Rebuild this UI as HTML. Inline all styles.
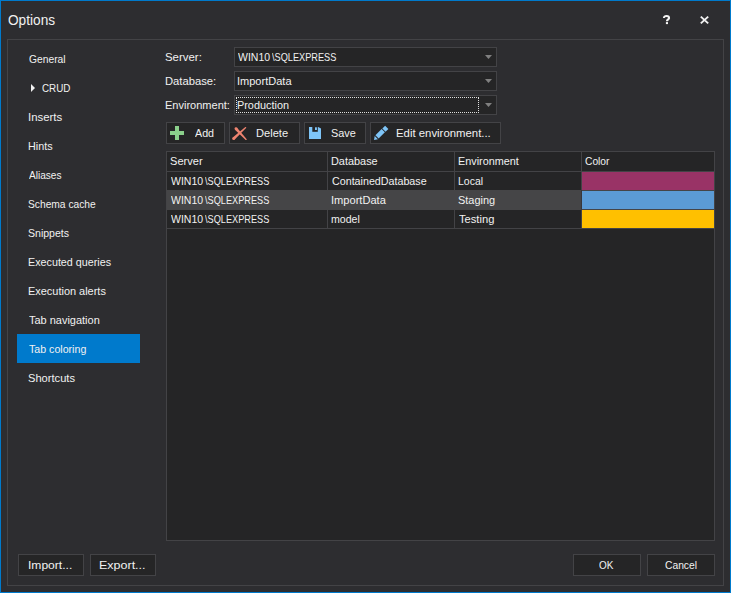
<!DOCTYPE html>
<html><head><meta charset="utf-8">
<style>
*{box-sizing:border-box;margin:0;padding:0}
html,body{width:731px;height:593px;overflow:hidden;background:#2d2d30}
body{position:relative;font-family:"Liberation Sans",sans-serif;font-size:11px;color:#f1f1f1}
.a{position:absolute}
.t{position:absolute;white-space:nowrap;line-height:11px;transform-origin:0 0}
#frame{left:0;top:0;width:731px;height:593px;border:1px solid #007acc}
#group{left:7px;top:39px;width:717px;height:547px;border:1px solid #434346}
#sel{left:17px;top:334px;width:123px;height:29px;background:#007acc}
.combo{position:absolute;left:234px;width:263px;height:20px;border:1px solid #434346;background:#252526}
.btn{position:absolute;height:22px;border:1px solid #434346;background:#252526}
#grid{left:166px;top:151px;width:549px;height:390px;border:1px solid #434346;background:#252526}
.vl{position:absolute;width:1px;background:#434346}
.hl{position:absolute;height:1px;background:#434346}
</style></head><body>
<div class="a" id="frame"></div>
<svg class="a" style="left:662px;top:14px" width="10" height="12" viewBox="0 0 10 12"><path d="M1.9 4 C1.9 2.7 2.9 2 4.5 2 C6.1 2 7.1 2.7 7.1 3.9 C7.1 5.3 4.9 5.5 4.9 7.3" fill="none" stroke="#f4f4f4" stroke-width="2"/><rect x="3.9" y="8.1" width="2.1" height="2" fill="#f4f4f4"/></svg>
<svg class="a" style="left:699px;top:15px" width="11" height="10" viewBox="0 0 11 10"><path d="M1.8 1.6 L9.2 8.4 M9.2 1.6 L1.8 8.4" stroke="#f1f1f1" stroke-width="1.9"/></svg>

<div class="a" id="group"></div>
<div class="a" id="sel"></div>
<svg class="a" style="left:30px;top:83px" width="6" height="10"><path d="M1 1 L5 5 L1 9 Z" fill="#f1f1f1"/></svg>

<div class="combo" style="top:47px"></div>
<div class="combo" style="top:71px"></div>
<div class="combo" style="top:95px"></div>
<div class="a" style="left:236px;top:97px;width:243px;height:16px;border:1px dotted #e0e0e0"></div>
<svg class="a" style="left:480px;top:50px" width="16" height="60"><path d="M5 5h7l-3.5 4z M5 29h7l-3.5 4z M5 53h7l-3.5 4z" fill="#808080"/></svg>

<div class="btn" style="left:166px;top:122px;width:59px"></div>
<svg class="a" style="left:170px;top:126px" width="14" height="14"><path d="M5 0h4v5h5v4h-5v5h-4v-5h-5v-4h5z" fill="#8bd08b"/></svg>
<div class="btn" style="left:229px;top:122px;width:71px"></div>
<svg class="a" style="left:230px;top:124px" width="20" height="18"><g fill="#ef8470"><path d="M4.95 5.80 L15.66 15.91 L16.54 15.09 L7.05 3.80Z M4.71 15.61 L16.07 3.91 L15.33 3.09 L2.69 13.39Z"/><circle cx="6.0" cy="4.8" r="1.45"/><circle cx="16.1" cy="15.5" r="0.6"/><circle cx="3.7" cy="14.5" r="1.5"/><circle cx="15.7" cy="3.5" r="0.55"/></g></svg>
<div class="btn" style="left:304px;top:122px;width:62px"></div>
<svg class="a" style="left:308px;top:126px" width="14" height="14"><path d="M1 1H10.2L13 2.6V13H1Z" fill="#7ec4f7"/><rect x="4.3" y="1" width="5.5" height="4.8" fill="#252526"/><rect x="7" y="1.3" width="1.9" height="2.7" fill="#7ec4f7"/></svg>
<div class="btn" style="left:370px;top:122px;width:131px"></div>
<svg class="a" style="left:368px;top:120px" width="30" height="26"><g transform="translate(6.0 20.0) rotate(-45)" fill="#7ec4f7"><path d="M0 0L3.3 -2.3V2.3Z"/><rect x="4.3" y="-2.3" width="8.8" height="4.6"/><rect x="14.1" y="-2.3" width="3.9" height="4.6"/></g></svg>

<div class="a" id="grid"></div>
<div class="hl" style="left:167px;top:171px;width:547px"></div>
<div class="hl" style="left:167px;top:228px;width:547px"></div>
<div class="vl" style="left:327px;top:152px;height:76px"></div>
<div class="vl" style="left:454px;top:152px;height:76px"></div>
<div class="vl" style="left:581px;top:152px;height:76px"></div>
<div class="a" style="left:167px;top:190px;width:547px;height:20px;background:#454547"></div>
<div class="a" style="left:581px;top:190px;width:1px;height:20px;background:#38383a"></div>
<div class="a" style="left:582px;top:172px;width:132px;height:18px;background:#993366"></div>
<div class="a" style="left:582px;top:191px;width:132px;height:18px;background:#5b9bd5"></div>
<div class="a" style="left:582px;top:210px;width:132px;height:18px;background:#ffc000"></div>

<div class="btn" style="left:18px;top:554px;width:66px"></div>
<div class="btn" style="left:90px;top:554px;width:66px"></div>
<div class="btn" style="left:573px;top:554px;width:68px"></div>
<div class="btn" style="left:647px;top:554px;width:68px"></div>
<div class="t" style="left:28.90px;top:54px;transform:scaleX(0.9359);">General</div>
<div class="t" style="left:41.80px;top:83px;transform:scaleX(0.8935);">CRUD</div>
<div class="t" style="left:27.87px;top:112px;transform:scaleX(1.0344);">Inserts</div>
<div class="t" style="left:27.92px;top:141px;transform:scaleX(0.9792);">Hints</div>
<div class="t" style="left:28.90px;top:170px;transform:scaleX(0.9171);">Aliases</div>
<div class="t" style="left:27.97px;top:199px;transform:scaleX(0.9306);">Schema cache</div>
<div class="t" style="left:27.94px;top:228px;transform:scaleX(0.9595);">Snippets</div>
<div class="t" style="left:27.92px;top:257px;transform:scaleX(0.9774);">Executed queries</div>
<div class="t" style="left:27.91px;top:286px;transform:scaleX(0.9948);">Execution alerts</div>
<div class="t" style="left:29.30px;top:315px;transform:scaleX(0.9971);">Tab navigation</div>
<div class="t" style="left:29.30px;top:344px;transform:scaleX(0.9661);">Tab coloring</div>
<div class="t" style="left:27.89px;top:373px;transform:scaleX(1.0111);">Shortcuts</div>
<div class="t" style="left:164.66px;top:52px;transform:scaleX(1.0382);">Server:</div>
<div class="t" style="left:164.68px;top:76px;transform:scaleX(1.0208);">Database:</div>
<div class="t" style="left:164.70px;top:100px;transform:scaleX(1.0016);">Environment:</div>
<div class="t" style="left:237.90px;top:52px;transform:scaleX(0.9545);">WIN10</div>
<div class="t" style="left:271.60px;top:52px;transform:scaleX(0.8351);">\SQLEXPRESS</div>
<div class="t" style="left:236.90px;top:76px;transform:scaleX(1.0019);">ImportData</div>
<div class="t" style="left:236.61px;top:100px;transform:scaleX(0.9882);">Production</div>
<div class="t" style="left:194.90px;top:128px;transform:scaleX(0.9737);">Add</div>
<div class="t" style="left:255.99px;top:128px;transform:scaleX(1.0097);">Delete</div>
<div class="t" style="left:330.51px;top:128px;transform:scaleX(0.9917);">Save</div>
<div class="t" style="left:396.27px;top:128px;transform:scaleX(1.0333);">Edit environment...</div>
<div class="t" style="left:169.69px;top:156px;transform:scaleX(1.0065);">Server</div>
<div class="t" style="left:330.61px;top:156px;transform:scaleX(0.9913);">Database</div>
<div class="t" style="left:457.51px;top:156px;transform:scaleX(0.9852);">Environment</div>
<div class="t" style="left:585.40px;top:156px;transform:scaleX(0.9308);">Color</div>
<div class="t" style="left:171.00px;top:176px;transform:scaleX(0.9545);">WIN10</div>
<div class="t" style="left:204.70px;top:176px;transform:scaleX(0.8351);">\SQLEXPRESS</div>
<div class="t" style="left:331.60px;top:176px;transform:scaleX(0.9732);">ContainedDatabase</div>
<div class="t" style="left:457.55px;top:176px;transform:scaleX(0.9520);">Local</div>
<div class="t" style="left:171.00px;top:195px;transform:scaleX(0.9545);">WIN10</div>
<div class="t" style="left:204.70px;top:195px;transform:scaleX(0.8351);">\SQLEXPRESS</div>
<div class="t" style="left:330.59px;top:195px;transform:scaleX(1.0074);">ImportData</div>
<div class="t" style="left:457.51px;top:195px;transform:scaleX(0.9944);">Staging</div>
<div class="t" style="left:171.00px;top:214px;transform:scaleX(0.9545);">WIN10</div>
<div class="t" style="left:204.70px;top:214px;transform:scaleX(0.8351);">\SQLEXPRESS</div>
<div class="t" style="left:330.64px;top:214px;transform:scaleX(0.9621);">model</div>
<div class="t" style="left:459.00px;top:214px;transform:scaleX(1.0147);">Testing</div>
<div class="t" style="left:27.50px;top:560px;transform:scaleX(1.0974);">Import...</div>
<div class="t" style="left:98.56px;top:560px;transform:scaleX(1.1359);">Export...</div>
<div class="t" style="left:599.30px;top:560px;transform:scaleX(0.9062);">OK</div>
<div class="t" style="left:664.60px;top:560px;transform:scaleX(0.9353);">Cancel</div>
<div class="t" style="left:8.20px;top:13px;transform:scaleX(0.9750);font-size:14px;line-height:14px">Options</div>
</body></html>
